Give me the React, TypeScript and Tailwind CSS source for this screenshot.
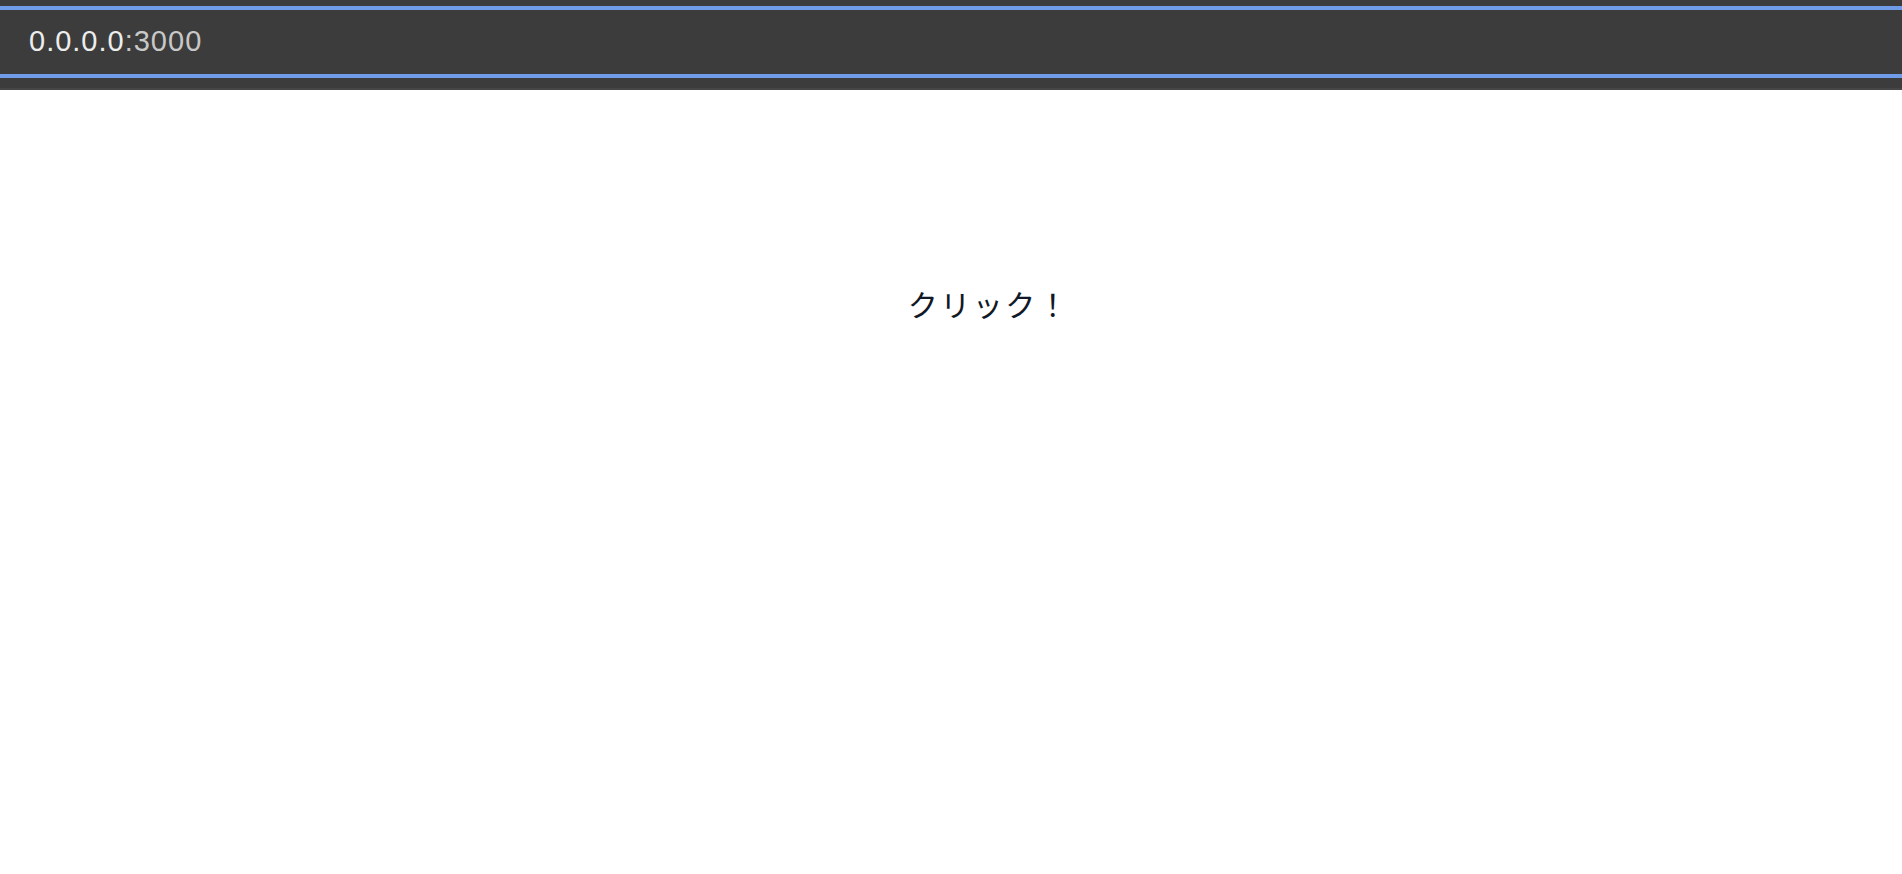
const App = () => {
  return (
    <div className="min-h-screen bg-white" style={{ fontFamily: '"Liberation Sans", "Noto Sans CJK JP", sans-serif' }}>
      {/* Address bar */}
      <header className="bg-[#3c3c3c] pt-[6px] border-b-2 border-[#464646]">
        <div className="border-y-4 border-[#6f9be8] h-[72px] flex items-center pl-[29px]">
          <span className="text-[29px] tracking-[1px] text-[#ededed]">
            0.0.0.0<span className="text-[#c8c8c8]">:3000</span>
          </span>
        </div>
        <div className="h-[10px]" />
      </header>

      <main className="flex justify-center pt-[198px] pl-[76px]">
        <button className="text-[30px] tracking-[2.5px] text-[#111827] leading-none" style={{ fontFamily: '"Noto Sans CJK JP", sans-serif' }}>
          クリック！
        </button>
      </main>
    </div>
  );
};

export default App;
